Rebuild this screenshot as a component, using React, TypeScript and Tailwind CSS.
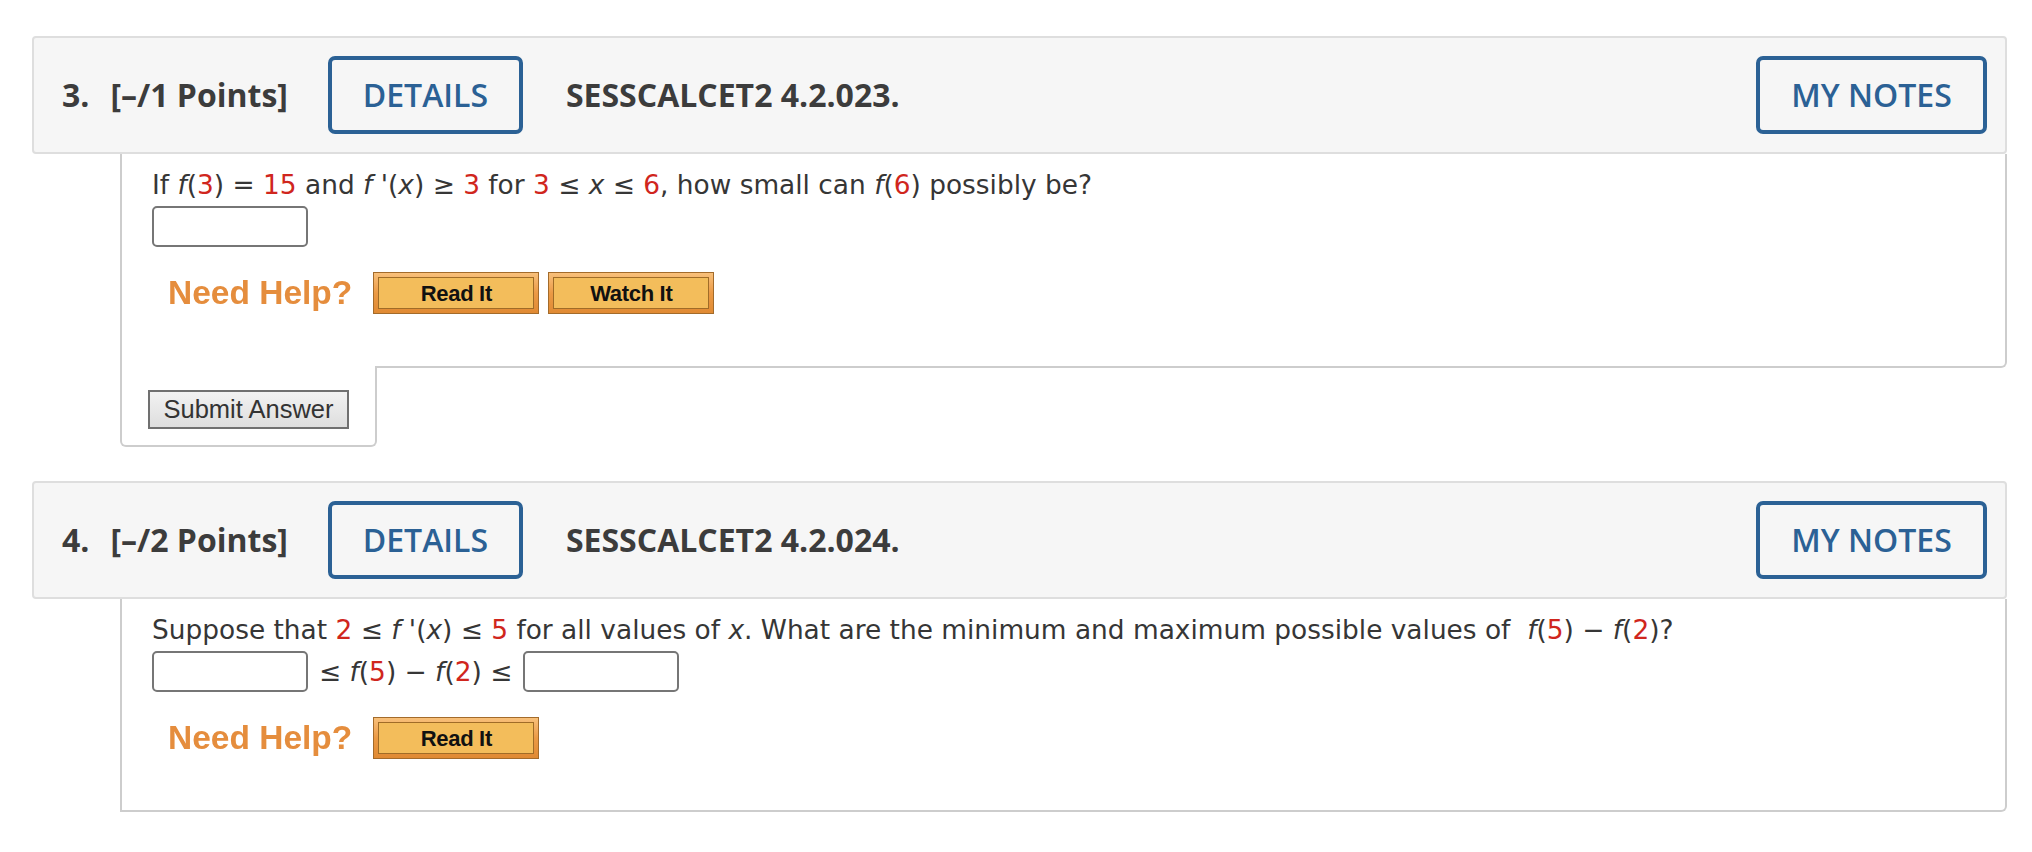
import React from "react";

const R = ({ children }: { children: React.ReactNode }) => (
  <span className="text-[#d0261d]">{children}</span>
);
const I = ({ children }: { children: React.ReactNode }) => <i>{children}</i>;

function Header({ num, pts, code }: { num: string; pts: string; code: string }) {
  return (
    <div className="flex h-[118px] items-center rounded-[4px] border-2 border-[#dedede] bg-[#f6f6f6] pl-[28px] pr-[18px] font-['Open_Sans',sans-serif] text-[32px] leading-none text-[#3c3c3c]">
      <span className="font-bold">{num}.</span>
      <span className="ml-[21px] font-bold">[–/{pts} Points]</span>
      <button className="ml-[40px] flex h-[78px] w-[195px] items-center justify-center rounded-[7px] border-4 border-[#2b6195] font-semibold text-[#2b6195]">
        DETAILS
      </button>
      <span className="ml-[43px] font-bold">SESSCALCET2 {code}.</span>
      <button className="ml-auto flex h-[78px] w-[231px] items-center justify-center rounded-[7px] border-4 border-[#2b6195] font-semibold text-[#2b6195]">
        MY NOTES
      </button>
    </div>
  );
}

function Input() {
  return <div className="h-[41px] w-[156px] shrink-0 rounded-[5px] border-2 border-[#767676] bg-white" />;
}

function HelpButton({ label }: { label: string }) {
  return (
    <div className="h-[42px] w-[166px] border border-[#a36b2b] bg-linear-to-b from-[#f8c07a] via-[#eb9a45] to-[#e08a33] p-[4px]">
      <div className="flex h-full w-full items-center justify-center border border-[#a06c27] bg-[#f3bd5b] pt-[1px] font-['Liberation_Sans',Arial,sans-serif] text-[22px] leading-none font-bold tracking-[-0.3px] text-[#111]">
        {label}
      </div>
    </div>
  );
}

function NeedHelp({ watch }: { watch?: boolean }) {
  return (
    <div className="ml-[16px] flex h-[42px] items-center">
      <span className="font-['Liberation_Sans',Arial,sans-serif] text-[33.5px] leading-none font-bold text-[#e58d3d] blur-[0.6px]">
        Need Help?
      </span>
      <div className="ml-[21px]">
        <HelpButton label="Read It" />
      </div>
      {watch && (
        <div className="ml-[9px]">
          <HelpButton label="Watch It" />
        </div>
      )}
    </div>
  );
}

export default function App() {
  return (
    <div className="min-h-screen bg-white pt-[36px] pl-[32px] pr-[25px] font-['DejaVu_Sans',Verdana,sans-serif] text-[#363636]">
      {/* Question 3 */}
      <Header num="3" pts="1" code="4.2.023" />
      <div className="ml-[88px]">
        <div className="rounded-br-[6px] border-x-2 border-b-2 border-[#cdcdcd] pl-[30px] pt-[13px] pb-[52px]">
          <div className="text-[26.4px] leading-[36px]">
            If <I>f</I>(<R>3</R>) = <R>15</R> and <I>f</I> '(<I>x</I>) ≥ <R>3</R> for <R>3</R> ≤ <I>x</I> ≤{" "}
            <R>6</R>, how small can <I>f</I>(<R>6</R>) possibly be?
          </div>
          <div className="mt-[3px]">
            <Input />
          </div>
          <div className="mt-[25px]">
            <NeedHelp watch />
          </div>
        </div>
        <div className="relative -mt-[2px] w-[257px] rounded-b-[6px] border-x-2 border-b-2 border-[#cdcdcd] bg-white pl-[26px] pt-[24px] pb-[16px]">
          <button className="flex h-[39px] w-[201px] items-center justify-center border-2 border-[#707070] bg-linear-to-b from-[#f2f2f2] to-[#dedede] font-['Liberation_Sans',Arial,sans-serif] text-[25.5px] leading-none text-[#333]">
            Submit Answer
          </button>
        </div>
      </div>

      {/* Question 4 */}
      <div className="mt-[34px]">
        <Header num="4" pts="2" code="4.2.024" />
      </div>
      <div className="ml-[88px]">
        <div className="rounded-br-[6px] border-x-2 border-b-2 border-[#cdcdcd] pl-[30px] pt-[13px] pb-[51px]">
          <div className="text-[26.4px] leading-[36px]">
            Suppose that <R>2</R> ≤ <I>f</I> '(<I>x</I>) ≤ <R>5</R> for all values of <I>x</I>. What are the minimum
            and maximum possible values of&nbsp; <I>f</I>(<R>5</R>) − <I>f</I>(<R>2</R>)?
          </div>
          <div className="mt-[3px] flex items-center">
            <Input />
            <span className="mx-[11px] text-[26.4px] leading-[36px]">
              ≤ <I>f</I>(<R>5</R>) − <I>f</I>(<R>2</R>) ≤
            </span>
            <Input />
          </div>
          <div className="mt-[25px]">
            <NeedHelp />
          </div>
        </div>
      </div>
    </div>
  );
}
